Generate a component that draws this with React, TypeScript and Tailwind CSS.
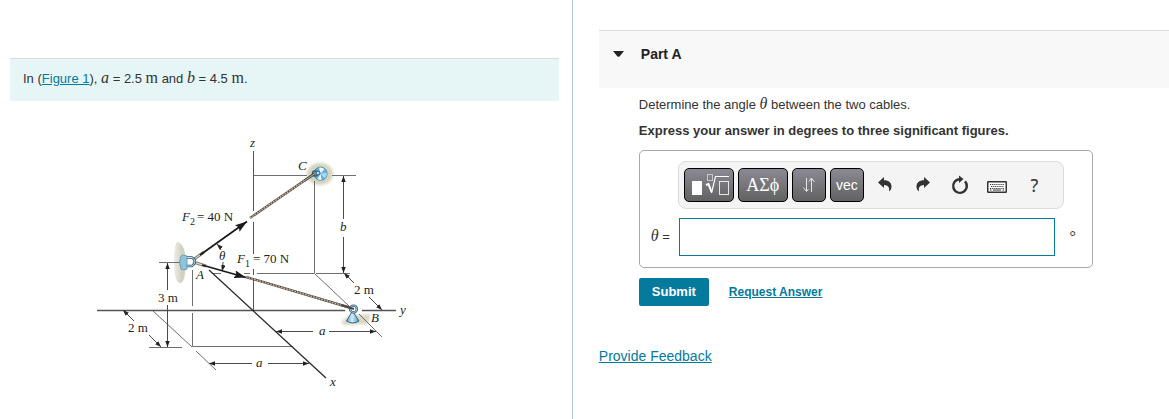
import React from "react";

function Var({ children }: { children: React.ReactNode }) {
  return <i className="font-['Liberation_Serif',serif] text-[16px] leading-none">{children}</i>;
}

function Unit({ children }: { children: React.ReactNode }) {
  return <span className="font-['Liberation_Serif',serif] text-[16px] leading-none">{children}</span>;
}

/* Two-strand rope drawn as a dark core with a light dashed twist. */
function Rope({ x1, y1, x2, y2 }: { x1: number; y1: number; x2: number; y2: number }) {
  return (
    <g>
      <line x1={x1} y1={y1} x2={x2} y2={y2} stroke="#5d5046" strokeWidth="2.4" />
      <line x1={x1} y1={y1} x2={x2} y2={y2} stroke="#cdbfae" strokeWidth="1.3" strokeDasharray="1.6 1.2" />
    </g>
  );
}

function Figure() {
  return (
    <svg
      viewBox="90 130 330 262"
      role="img"
      aria-label="Two cables attached at A, running to C and to B"
      className="block h-[262px] w-[330px] font-['Liberation_Serif',serif]"
    >
      <defs>
        <marker id="tip" viewBox="0 0 8 6" refX="8" refY="3" markerWidth="6" markerHeight="4.5" markerUnits="userSpaceOnUse" orient="auto-start-reverse">
          <path d="M0 0 L8 3 L0 6 Z" fill="#222" />
        </marker>
        <marker id="force" viewBox="0 0 12 8" refX="12" refY="4" markerWidth="12" markerHeight="8" markerUnits="userSpaceOnUse" orient="auto">
          <path d="M0 0 L12 4 L0 8 L2 4 Z" fill="#1d1a1b" />
        </marker>
        <filter id="haze" x="-40%" y="-40%" width="180%" height="180%">
          <feGaussianBlur stdDeviation="1.6" />
        </filter>
        <linearGradient id="wall" x1="0" x2="1">
          <stop offset="0" stopColor="#eeeee6" />
          <stop offset="0.7" stopColor="#cfcfc0" />
          <stop offset="1" stopColor="#dcdcd0" />
        </linearGradient>
        <linearGradient id="steel" x1="0" x2="1">
          <stop offset="0" stopColor="#4ba3d3" />
          <stop offset="0.45" stopColor="#d6eefa" />
          <stop offset="1" stopColor="#3a95cb" />
        </linearGradient>
      </defs>

      {/* supports' shading */}
      <ellipse cx="320" cy="174" rx="13" ry="11" fill="#d3d3bf" filter="url(#haze)" />
      <path d="M341 322 L350 315 L371 314 L368 324 L344 325 Z" fill="#d9d6c6" filter="url(#haze)" />
      <path d="M177 242 C184 243 186 254 186 263 C186 274 184 284 179 283 C172 280 173 246 177 242 Z" fill="url(#wall)" />

      {/* thin construction lines */}
      <g stroke="#6f6f6f" strokeWidth="1" fill="none">
        <path d="M253.5 175.5 H307 M332 175.5 H356" />
        <path d="M314.5 181 V273.5 L349 306 M359 314 L382 337" />
        <path d="M212 273.5 H221 M244 273.5 H250 M257 273.5 H314 M316 273.5 H350" />
        <path d="M192.5 270 V306 M192.5 313 V346.5 H293" />
        <path d="M149 347.5 H182 M159 262.5 H180" />
        <path d="M152 310 L192 347 M196 351 L216 370" />
        <path d="M253.5 151 V211 M253.5 222 V254 M253.5 269 V275 M253.5 279 V310" stroke="#555" />
      </g>

      {/* axes */}
      <path d="M97 310.5 H345 M362 310.5 H396" stroke="#555" strokeWidth="1.4" />
      <path d="M209 270 L326 378" stroke="#2b2b2b" strokeWidth="1.3" />

      {/* dimensions */}
      <g stroke="#4a4a4a" strokeWidth="1" fill="none">
        <path d="M343.5 219 V176" markerEnd="url(#tip)" />
        <path d="M343.5 237 V273" markerEnd="url(#tip)" />
        <path d="M167.5 290 V263" markerEnd="url(#tip)" />
        <path d="M167.5 305 V347" markerEnd="url(#tip)" />
        <path d="M134 321 L123 310" markerEnd="url(#tip)" />
        <path d="M149 335 L161 347" markerEnd="url(#tip)" />
        <path d="M354 283 L344 273" markerEnd="url(#tip)" />
        <path d="M369 297 L382 310" markerEnd="url(#tip)" />
        <path d="M313 331.5 H276" markerEnd="url(#tip)" />
        <path d="M329 331.5 H376" markerEnd="url(#tip)" />
        <path d="M252 363.5 H209" markerEnd="url(#tip)" />
        <path d="M268 363.5 H309" markerEnd="url(#tip)" />
        <path d="M217 244 Q220 247 221 250" markerStart="url(#tip)" />
        <path d="M223 262 Q223 267 222 271" markerEnd="url(#tip)" />
      </g>

      {/* cables and force vectors */}
      <Rope x1={250} y1={218} x2={314} y2={174} />
      <Rope x1={246} y1={277} x2={351} y2={308} />
      <path d="M193 260 L204 252 M193 262 L206 266" stroke="#8a8178" strokeWidth="3" />
      <path d="M193 260 L204 252 M193 262 L206 266" stroke="#e6e1d8" strokeWidth="1" />
      <path d="M200 255 L247 221.5" stroke="#1d1a1b" strokeWidth="1.8" markerEnd="url(#force)" />
      <path d="M202 265 L246 277.5" stroke="#1d1a1b" strokeWidth="1.8" markerEnd="url(#force)" />

      {/* anchor A */}
      <path d="M181 256 Q183 254 187 256 V269 Q184 271 181 269 Q178 262 181 256 Z" fill="#8fc3dc" stroke="#5b93ae" strokeWidth="0.8" />
      <path d="M187 257.5 H192 Q195 259 195 262 Q194 265 192 266 H187" fill="none" stroke="#31586c" strokeWidth="2.4" />
      <path d="M187 257.5 H192 Q195 259 195 262 Q194 265 192 266 H187" fill="none" stroke="#b9dfee" strokeWidth="1" />

      {/* anchor C */}
      <circle cx="320.5" cy="173.7" r="6.6" fill="#5cb3e4" stroke="#4a7d9a" strokeWidth="0.8" />
      <path d="M320.5 173.700 L319 167.700 A6.200 6.200 0 0 1 324.500 169 Z M320.500 173.700 L317.500 179 A6.200 6.200 0 0 0 321.500 179.900 Z" fill="#eaf6fc" />
      <path d="M320.5 173.700 L326.700 172.500 A6.200 6.200 0 0 1 324.500 178.300 Z" fill="#a9d8f2" />
      <circle cx="315" cy="173.5" r="2.6" fill="none" stroke="#31586c" strokeWidth="1.3" />
      <circle cx="318" cy="173" r="2" fill="#bcdcea" stroke="#31586c" strokeWidth="1" />
      <path d="M304 181 L315 173.500" stroke="#4d4a47" strokeWidth="2.2" />
      <path d="M304 181 L315 173.500" stroke="#c9c4bd" strokeWidth="0.8" />

      {/* anchor B */}
      <path d="M352.5 311 L359 321 Q353 325 346.5 321 Z" fill="url(#steel)" stroke="#34586c" strokeWidth="0.9" />
      <circle cx="353.5" cy="309" r="3.4" fill="#fff" stroke="#31586c" strokeWidth="2.4" />
      <circle cx="353.5" cy="309" r="3.4" fill="none" stroke="#9fd0e6" strokeWidth="1" />
      <path d="M341 305 L354 309" stroke="#4d4a47" strokeWidth="2" />

      {/* labels */}
      <g fill="#231f20" fontSize="13">
        <g fontStyle="italic">
          <text x="250" y="147">z</text>
          <text x="298" y="170">C</text>
          <text x="340" y="231">b</text>
          <text x="196" y="279">A</text>
          <text x="219" y="260">θ</text>
          <text x="371" y="322">B</text>
          <text x="400" y="314">y</text>
          <text x="330" y="386">x</text>
          <text x="319" y="335">a</text>
          <text x="256" y="367">a</text>
        </g>
        <text x="182" y="221"><tspan fontStyle="italic">F</tspan><tspan fontSize="10" dy="4">2</tspan></text>
        <text x="197" y="221">= 40 N</text>
        <text x="237" y="263"><tspan fontStyle="italic">F</tspan><tspan fontSize="10" dy="4">1</tspan></text>
        <text x="253" y="263">= 70 N</text>
        <text x="158" y="302">3 m</text>
        <text x="128" y="332">2 m</text>
        <text x="354" y="294">2 m</text>
      </g>
    </svg>
  );
}

const darkKey =
  "flex h-[34px] items-center justify-center rounded-[5px] border border-black bg-gradient-to-b from-[#8b8a94] to-[#626262] text-white";
const plainKey = "flex h-[34px] w-[37px] items-center justify-center text-[#333]";

function Toolbar() {
  return (
    <div className="flex h-12 w-[386px] max-w-full items-center rounded-[8px] border border-[#dcdcdc] bg-[#f4f4f4] pl-[5px]">
      <div className="mr-[3px] flex gap-1">
        <button type="button" aria-label="Templates" className={`${darkKey} w-[50px]`}>
          <svg viewBox="0 0 40 24" className="h-6 w-10 shrink-0" fill="none" stroke="#fff">
            <rect x="3" y="8" width="10" height="14" fill="#fff" stroke="none" />
            <rect x="18.5" y="1.5" width="5" height="6" stroke="#c8c8c8" />
            <path d="M17 12 L19.500 11 L22.500 19" strokeWidth="2" />
            <path d="M22.500 20 L26.500 3.500 H40" strokeWidth="1.2" />
            <rect x="30.500" y="8.500" width="9" height="13" stroke="#e6e6e6" />
          </svg>
        </button>
        <button type="button" aria-label="Symbols" className={`${darkKey} w-[50px] font-['Liberation_Serif',serif] text-[18px]`}>
          ΑΣϕ
        </button>
        <button type="button" aria-label="Subscript and superscript" className={`${darkKey} w-[34px]`}>
          <svg viewBox="0 0 14 18" className="h-[18px] w-3.5" fill="none" stroke="#e4e4e4">
            <path d="M4.500 2 V15 M1.500 11.500 L4.500 15.500 L6.500 13" />
            <path d="M9.500 16 V3 M7 5.500 L9.500 2 L12.500 6" />
          </svg>
        </button>
        <button type="button" className={`${darkKey} w-[34px] text-[14px]`}>vec</button>
      </div>
      <button type="button" aria-label="Undo" className={plainKey}>
        <svg viewBox="0 0 14 16" className="h-4 w-3.5" fill="currentColor">
          <path d="M0 5.500 L6 0 V3.300 C11 3.300 13.500 6 13.500 9.500 C13.500 11.600 12.700 13.500 11 14.500 C11.700 10 10 8.200 6 8 V11 Z" />
        </svg>
      </button>
      <button type="button" aria-label="Redo" className={`${plainKey} ml-px`}>
        <svg viewBox="0 0 14 16" className="h-4 w-3.5" fill="currentColor">
          <path d="M14 5.500 L8 0 V3.300 C3 3.300 0.500 6 0.500 9.500 C0.500 11.600 1.300 13.500 3 14.500 C2.300 10 4 8.200 8 8 V11 Z" />
        </svg>
      </button>
      <button type="button" aria-label="Reset" className={plainKey}>
        <svg viewBox="0 0 18 20" className="h-5 w-[18px]" fill="none" stroke="currentColor" strokeWidth="2.4">
          <path d="M9 4.200 A6.800 6.800 0 1 0 14 6.400" />
          <path d="M8 0.500 L12.500 4 L8 8 Z" fill="currentColor" stroke="none" />
        </svg>
      </button>
      <button type="button" aria-label="Keyboard" className={`${plainKey} pt-1`}>
        <svg viewBox="0 0 20 12" className="h-3 w-5">
          <rect x="0.75" y="0.75" width="18.5" height="10.5" rx="0.5" fill="#fff" stroke="#333" strokeWidth="1.5" />
          <path d="M3 3.500 H17 M4 5.500 H17 M3 7.500 H17" stroke="#333" strokeWidth="1.2" strokeDasharray="1.2 0.9" />
          <path d="M3 9 H4.500 M6 9 H14 M15.500 9 H17" stroke="#333" strokeWidth="1.2" />
        </svg>
      </button>
      <button type="button" aria-label="Help" className={`${plainKey} font-['Noto_Sans',sans-serif] text-[18px]`}>?</button>
    </div>
  );
}

export default function App() {
  return (
    <div className="flex min-h-screen bg-white font-['Liberation_Sans',Arial,sans-serif] text-[13px] text-[#333]">
      <section className="w-[49%] border-r border-[#b3c8dc] pt-[58px] pr-[13px] pl-[10px]">
        <p className="border-t border-[#d9dcdc] bg-[#e6f6f6] px-[13px] pt-[10px] pb-3 leading-5">
          In (<a href="#figure" className="text-[#047a9c] underline">Figure 1</a>), <Var>a</Var> = 2.5 <Unit>m</Unit> and{" "}
          <Var>b</Var> = 4.5 <Unit>m</Unit>.
        </p>
        <div id="figure" className="mt-[29px] pl-20">
          <Figure />
        </div>
      </section>

      <main className="min-w-0 flex-1 pt-[30px] pl-[26px]">
        <h2 className="h-[58px] border-t border-[#dcdcdc] bg-[#f8f8f8] pt-[13px] pl-[14px]">
          <button type="button" aria-expanded="true" className="flex items-center gap-[17px] text-[14px] leading-5 font-bold text-[#222]">
            <svg viewBox="0 0 11 6" className="h-1.5 w-[11px]" fill="#222">
              <path d="M0 0 H11 L6.500 5.500 Q5.500 6 4.500 5.500 Z" />
            </svg>
            Part A
          </button>
        </h2>

        <div className="pt-[7px] pr-[76px] pl-10">
          <p className="leading-5">
            Determine the angle <Var>θ</Var> between the two cables.
          </p>
          <p className="mt-1.5 leading-5 font-bold">Express your answer in degrees to three significant figures.</p>

          <form onSubmit={(e) => e.preventDefault()}>
            <div className="mt-[9px] rounded-[5px] border border-[#a8a8a8] pt-[10px] pr-4 pb-[11px] pl-[11px]">
              <div className="pl-[27px]">
                <Toolbar />
              </div>
              <div className="mt-[9px] flex items-center">
                <label htmlFor="answer" className="w-7 shrink-0 whitespace-nowrap">
                  <Var>θ</Var> =
                </label>
                <input id="answer" type="text" className="h-[38px] min-w-0 flex-1 border border-[#047a9c] bg-white px-2 text-[14px] outline-none" />
                <span className="w-[21px] shrink-0 text-right font-['Liberation_Serif',serif] text-[16px] leading-5">°</span>
              </div>
            </div>
            <div className="mt-[10px] flex items-center gap-5">
              <button type="submit" className="h-7 w-[70px] rounded-[2px] bg-[#047a9c] text-[13px] font-bold text-white">
                Submit
              </button>
              <a href="#request" className="text-[12px] font-bold text-[#047a9c] underline">Request Answer</a>
            </div>
          </form>
        </div>

        <a href="#feedback" className="mt-10 inline-block text-[14px] leading-5 text-[#047a9c] underline">Provide Feedback</a>
      </main>
    </div>
  );
}
